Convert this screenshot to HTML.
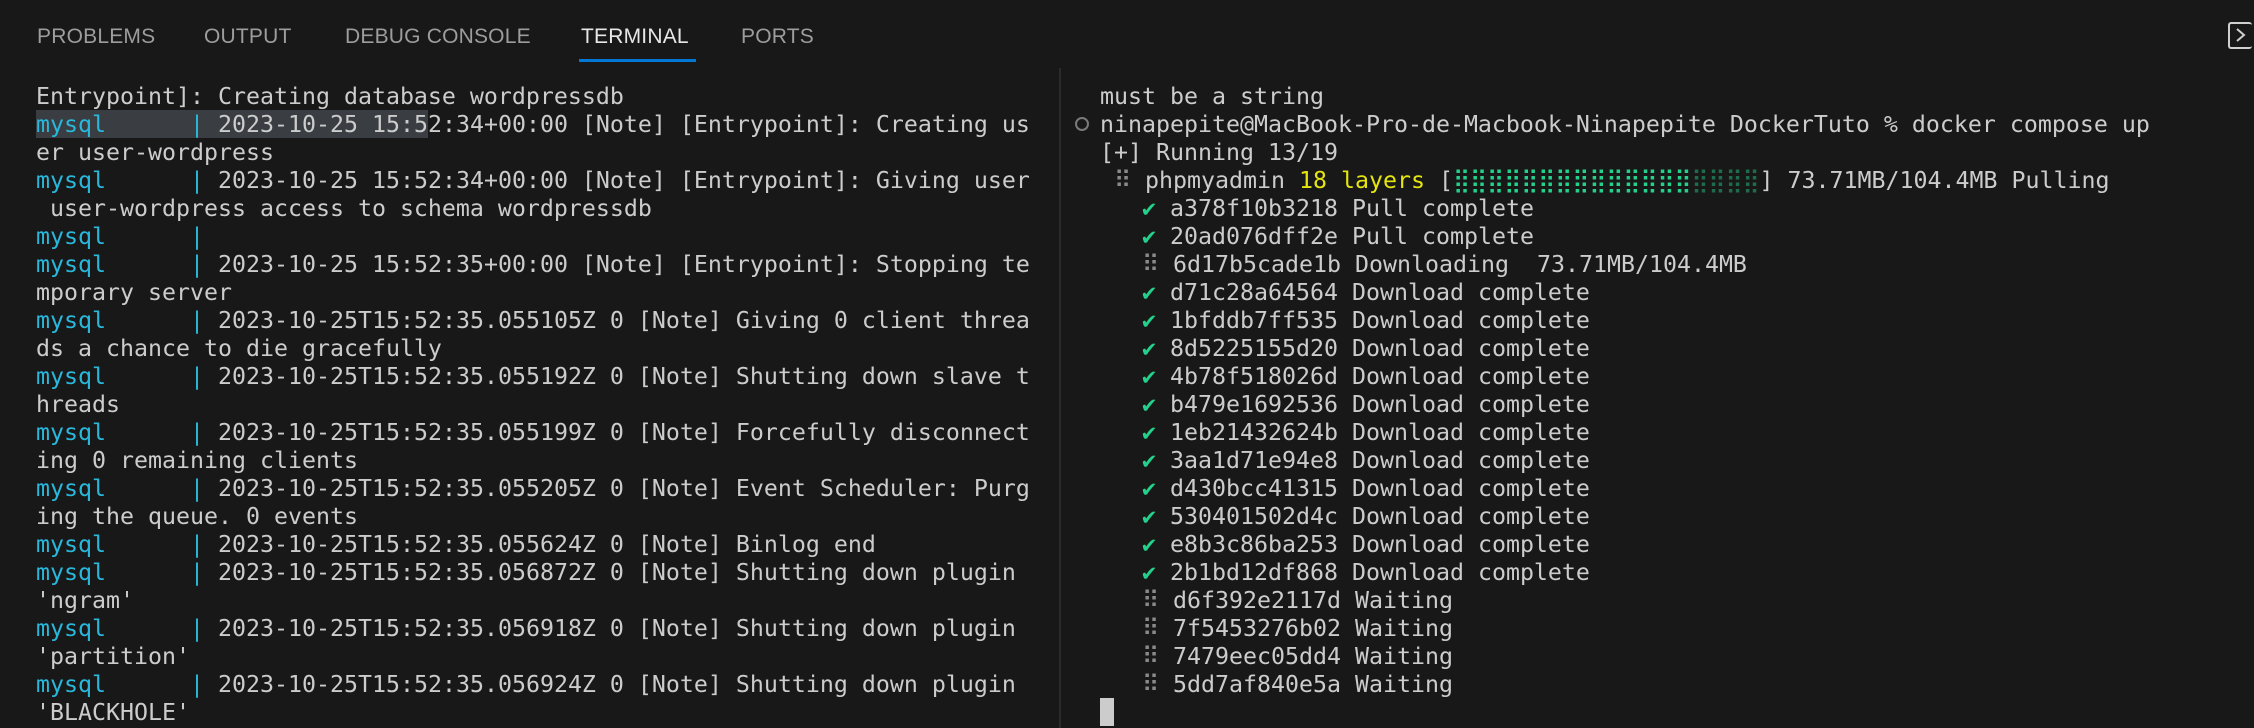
<!DOCTYPE html>
<html><head><meta charset="utf-8"><style>
html,body{margin:0;padding:0;width:2254px;height:728px;background:#181818;overflow:hidden}
.tab{position:absolute;top:25px;font:21px "Liberation Sans",sans-serif;color:#9d9d9d;white-space:nowrap;letter-spacing:0.2px}
pre{position:absolute;margin:0;font-family:"DejaVu Sans Mono","Liberation Mono",monospace;font-size:23.25px;line-height:28px;color:#cccccc;white-space:pre}
.c{color:#29b8db}.y{color:#e5e510}.g{color:#23d18b}.d{color:#8a8a8a}.gd{color:#1f6b4e}
</style></head><body>
<div class="tab" style="left:37px">PROBLEMS</div>
<div class="tab" style="left:204px">OUTPUT</div>
<div class="tab" style="left:345px">DEBUG CONSOLE</div>
<div class="tab" style="left:581px;color:#e7e7e7">TERMINAL</div>
<div class="tab" style="left:741px">PORTS</div>
<div style="position:absolute;left:579px;top:59px;width:117px;height:3px;background:#0078d4"></div>
<div style="position:absolute;left:2228px;top:22px;width:22px;height:23px;border:2px solid #cfcfcf;border-radius:3px;border-right:none"></div>
<svg style="position:absolute;left:2234px;top:26px" width="14" height="18"><path d="M3 3 L10 9 L3 15" stroke="#cfcfcf" stroke-width="2" fill="none"/></svg>
<div style="position:absolute;left:1059px;top:68px;width:2px;height:660px;background:#2b2b2b"></div>
<div style="position:absolute;left:36px;top:110px;width:392px;height:28px;background:#3a3d41"></div>
<div style="position:absolute;left:1075px;top:117px;width:10px;height:10px;border:2px solid #7a7a7a;border-radius:50%"></div>
<div style="position:absolute;left:1100px;top:698px;width:14px;height:28px;background:#cccccc"></div>
<pre style="left:36px;top:83px">Entrypoint]: Creating database wordpressdb
<span class="c">mysql</span>      <span class="c">|</span> 2023-10-25 15:52:34+00:00 [Note] [Entrypoint]: Creating us
er user-wordpress
<span class="c">mysql</span>      <span class="c">|</span> 2023-10-25 15:52:34+00:00 [Note] [Entrypoint]: Giving user
 user-wordpress access to schema wordpressdb
<span class="c">mysql</span>      <span class="c">|</span>
<span class="c">mysql</span>      <span class="c">|</span> 2023-10-25 15:52:35+00:00 [Note] [Entrypoint]: Stopping te
mporary server
<span class="c">mysql</span>      <span class="c">|</span> 2023-10-25T15:52:35.055105Z 0 [Note] Giving 0 client threa
ds a chance to die gracefully
<span class="c">mysql</span>      <span class="c">|</span> 2023-10-25T15:52:35.055192Z 0 [Note] Shutting down slave t
hreads
<span class="c">mysql</span>      <span class="c">|</span> 2023-10-25T15:52:35.055199Z 0 [Note] Forcefully disconnect
ing 0 remaining clients
<span class="c">mysql</span>      <span class="c">|</span> 2023-10-25T15:52:35.055205Z 0 [Note] Event Scheduler: Purg
ing the queue. 0 events
<span class="c">mysql</span>      <span class="c">|</span> 2023-10-25T15:52:35.055624Z 0 [Note] Binlog end
<span class="c">mysql</span>      <span class="c">|</span> 2023-10-25T15:52:35.056872Z 0 [Note] Shutting down plugin
'ngram'
<span class="c">mysql</span>      <span class="c">|</span> 2023-10-25T15:52:35.056918Z 0 [Note] Shutting down plugin
'partition'
<span class="c">mysql</span>      <span class="c">|</span> 2023-10-25T15:52:35.056924Z 0 [Note] Shutting down plugin
'BLACKHOLE'</pre>
<pre style="left:1100px;top:83px">must be a string
ninapepite@MacBook-Pro-de-Macbook-Ninapepite DockerTuto % docker compose up
[+] Running 13/19
 <span class="d">⠿</span> phpmyadmin <span class="y">18 layers</span> [<span class="g">⣿⣿⣿⣿⣿⣿⣿⣿⣿⣿⣿⣿⣿⣿</span><span class="gd">⣿⣿⣿⣿</span>] 73.71MB/104.4MB Pulling
   <span class="g">✔</span> a378f10b3218 Pull complete
   <span class="g">✔</span> 20ad076dff2e Pull complete
   <span class="d">⠿</span> 6d17b5cade1b Downloading  73.71MB/104.4MB
   <span class="g">✔</span> d71c28a64564 Download complete
   <span class="g">✔</span> 1bfddb7ff535 Download complete
   <span class="g">✔</span> 8d5225155d20 Download complete
   <span class="g">✔</span> 4b78f518026d Download complete
   <span class="g">✔</span> b479e1692536 Download complete
   <span class="g">✔</span> 1eb21432624b Download complete
   <span class="g">✔</span> 3aa1d71e94e8 Download complete
   <span class="g">✔</span> d430bcc41315 Download complete
   <span class="g">✔</span> 530401502d4c Download complete
   <span class="g">✔</span> e8b3c86ba253 Download complete
   <span class="g">✔</span> 2b1bd12df868 Download complete
   <span class="d">⠿</span> d6f392e2117d Waiting
   <span class="d">⠿</span> 7f5453276b02 Waiting
   <span class="d">⠿</span> 7479eec05dd4 Waiting
   <span class="d">⠿</span> 5dd7af840e5a Waiting</pre>
</body></html>
